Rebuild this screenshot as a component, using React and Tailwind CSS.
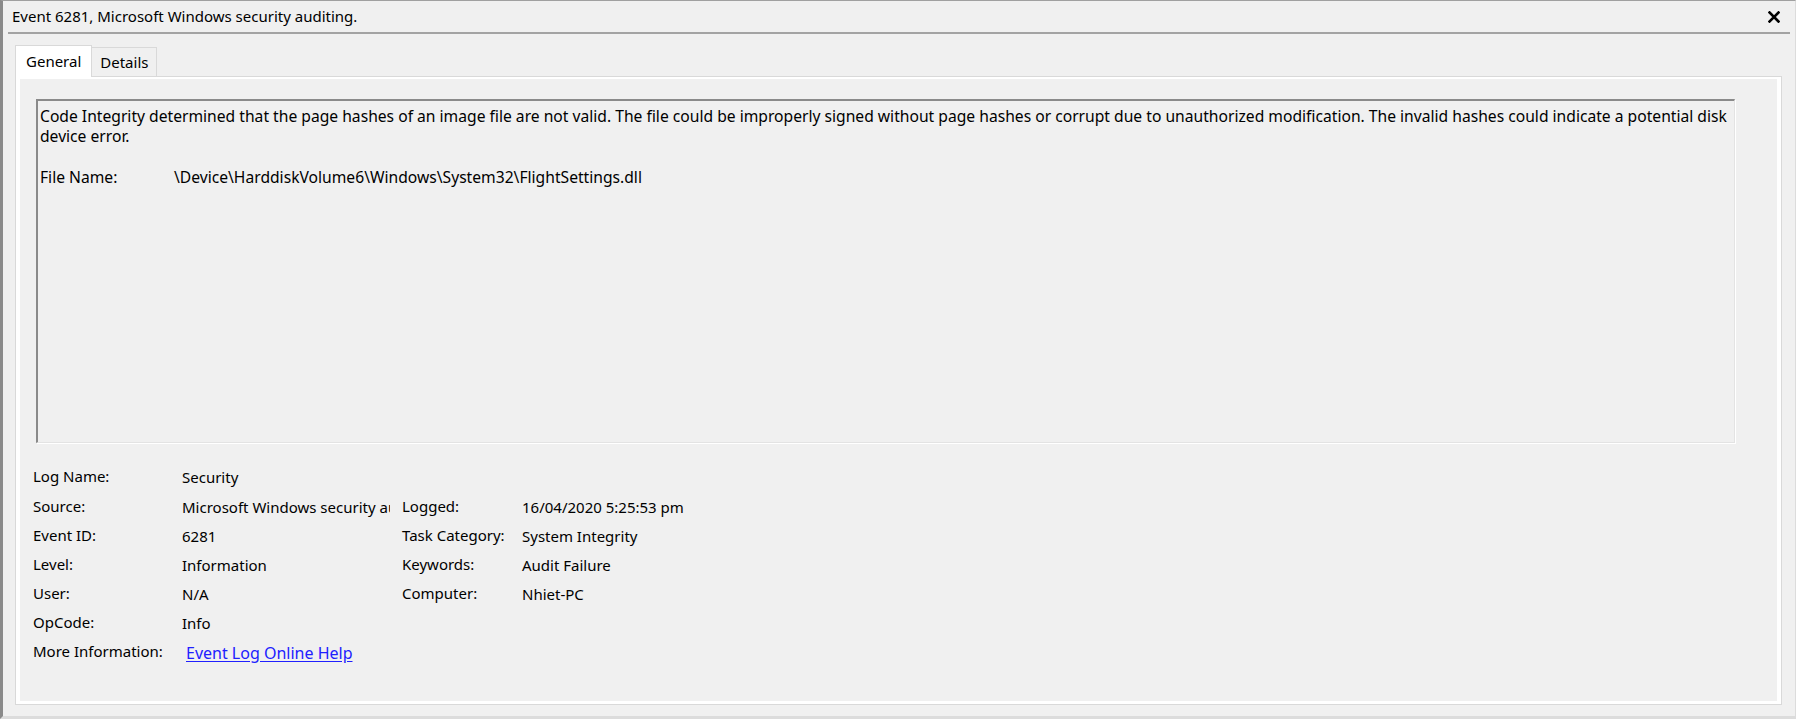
const leftRows = [
  ['Log Name:', 'Security'],
  ['Source:', 'Microsoft Windows security auditing.'],
  ['Event ID:', '6281'],
  ['Level:', 'Information'],
  ['User:', 'N/A'],
  ['OpCode:', 'Info'],
];

const rightRows = [
  null,
  ['Logged:', '16/04/2020 5:25:53 pm'],
  ['Task Category:', 'System Integrity'],
  ['Keywords:', 'Audit Failure'],
  ['Computer:', 'Nhiet-PC'],
  null,
];

function CloseIcon() {
  return (
    <svg width="12" height="12" viewBox="0 0 12 12" className="block">
      <path d="M1.5 1.5 L10.5 10.5 M10.5 1.5 L1.5 10.5" stroke="#000" strokeWidth="2.6" strokeLinecap="square" />
    </svg>
  );
}

export default function App() {
  return (
    <div className="w-[1796px] h-[719px] bg-[#f0f0f0] text-black font-['Noto_Sans',sans-serif] text-[15px]">
      <div className="h-full flex flex-col border-l-[3px] border-l-[#8a8a8a] border-t border-t-[#a0a0a0] border-r border-r-[#dcdcdc] border-b-[3px] border-b-[#dcdcdc]">
        {/* title bar */}
        <div className="h-[31px] flex items-center justify-between pl-[9px] pr-[15px]">
          <span className="leading-none">Event 6281, Microsoft Windows security auditing.</span>
          <CloseIcon />
        </div>
        <div className="ml-[5px] mr-[5px] h-[2px] bg-[#a3a3a3]" />

        {/* tabs */}
        <div className="flex items-end pl-[12px] mt-[10px] h-[32px]">
          <div className="h-[32px] px-[10px] pt-[6px] bg-white border border-b-0 border-[#d9d9d9] leading-[18px] relative z-10 -mb-px">
            General
          </div>
          <div className="h-[29px] px-[8px] pt-[5px] bg-[#f0f0f0] border border-l-0 border-b-0 border-[#d9d9d9] leading-[18px]">
            Details
          </div>
        </div>

        {/* tab page */}
        <div className="ml-[12px] mr-[13px] mb-[11px] flex-1 border border-[#d9d9d9] bg-white pt-[2px] px-[4px] pb-[3px] flex">
          <div className="flex-1 bg-[#f0f0f0] pl-[16px] pr-[42px] pt-[20px]">
            {/* description box */}
            <div className="h-[344px] border-t-2 border-l-2 border-t-[#8a8a8a] border-l-[#8a8a8a] border-b border-r border-b-[#e3e3e3] border-r-[#e3e3e3] shadow-[1px_1px_0_0_#ffffff] pl-[2px] pt-[5px] text-[15.65px] leading-[20px]">
              <p>
                Code Integrity determined that the page hashes of an image file are not valid. The file could be improperly signed without page hashes or corrupt due to unauthorized modification. The invalid hashes could indicate a potential disk device error.
              </p>
              <div className="flex mt-[21px]">
                <span className="w-[134px]">File Name:</span>
                <span>\Device\HarddiskVolume6\Windows\System32\FlightSettings.dll</span>
              </div>
            </div>

            {/* details grid */}
            <div className="mt-[20px] -ml-[3px]">
              {leftRows.map((row, i) => (
                <div key={row[0]} className="flex h-[29.2px] items-center">
                  <span className="w-[149px] shrink-0 -mt-[2px]">{row[0]}</span>
                  <span className="w-[208px] shrink-0 overflow-hidden whitespace-nowrap">{row[1]}</span>
                  {rightRows[i] && (
                    <>
                      <span className="w-[120px] shrink-0 ml-[12px] -mt-[2px]">{rightRows[i][0]}</span>
                      <span>{rightRows[i][1]}</span>
                    </>
                  )}
                </div>
              ))}
              <div className="flex h-[29.2px] items-center">
                <span className="w-[153px] shrink-0 -mt-[2px]">More Information:</span>
                <a href="#" className="text-[16px] text-[#2020ff] underline underline-offset-2">Event Log Online Help</a>
              </div>
            </div>
          </div>
        </div>
      </div>
    </div>
  );
}
